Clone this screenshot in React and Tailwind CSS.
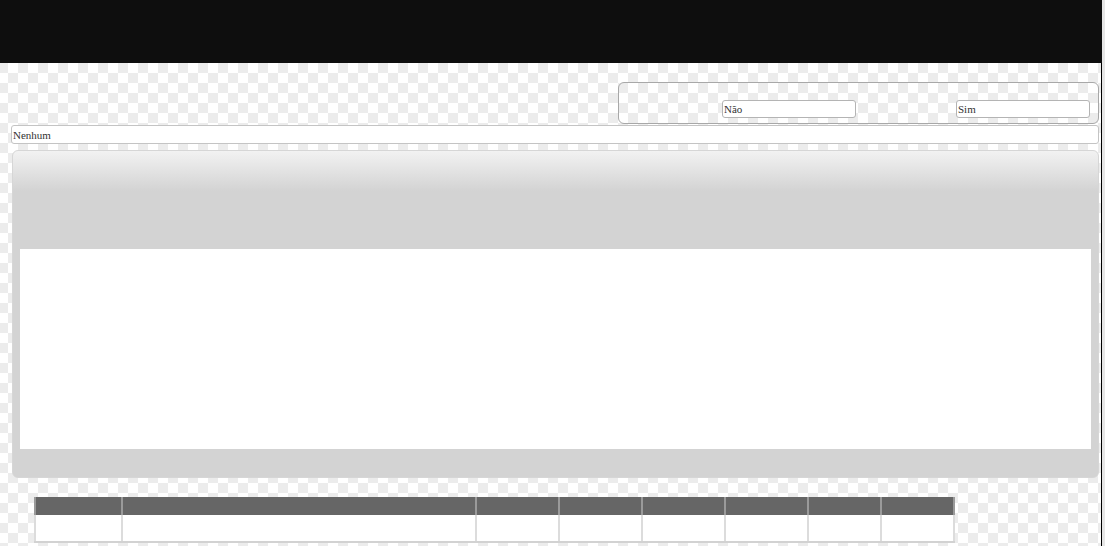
export default function App() {
    const cols = [87, 354, 83, 83, 83, 83, 73, 73];

    return (
        <div className="h-[546px] w-[1105px] overflow-hidden bg-[#e6e6e6] font-['Liberation_Serif',serif] text-[11px] text-[#333]">
            <div className="w-[1102px]">
                <header className="h-[63px] bg-[#0e0e0e]" />

                <main className="h-[483px] border-r border-black bg-[repeating-conic-gradient(#ececec_0_25%,#ffffff_0_50%)] bg-[length:20px_20px] bg-[position:8px_0px]">
                    <div className="flex justify-end pt-[19px] pr-[2px]">
                        <fieldset className="flex h-[42px] w-[481px] items-end rounded-[6px] border border-[#a8a8a8] pb-[5px]">
                            <input
                                readOnly
                                value="Não"
                                className="ml-[103px] h-[18px] w-[134px] rounded-[3px] border border-[#b4b4b4] bg-white px-px text-[11px] text-[#333] outline-none"
                            />
                            <input
                                readOnly
                                value="Sim"
                                className="ml-[100px] h-[18px] w-[134px] rounded-[3px] border border-[#b4b4b4] bg-white px-px text-[11px] text-[#333] outline-none"
                            />
                        </fieldset>
                    </div>

                    <div className="mt-px pl-[11px] pr-[2px]">
                        <input
                            readOnly
                            value="Nenhum"
                            className="block h-[19px] w-full rounded-[3px] border border-[#c4c4c4] bg-white px-px text-[11px] text-[#333] outline-none"
                        />
                    </div>

                    <section className="mt-[6px] ml-[12px] mr-[2px] h-[328px] rounded-[6px] border border-[#d6d6d6] bg-[linear-gradient(to_bottom,#f2f2f2_0px,#d3d3d3_40px,#d3d3d3_100%)] px-[7px] pt-[98px]">
                        <div className="h-[200px] bg-white" />
                    </section>

                    <div className="mt-[19px] ml-[34px] w-[921px]">
                        <div className="flex h-[18px]">
                            {cols.map((w, i) => (
                                <div key={i} style={{ width: w }} className="border-l-2 border-[#9a9a9a] bg-[#666666]" />
                            ))}
                            <div className="w-[2px] bg-[#9a9a9a]" />
                        </div>
                        <div className="flex h-[28px] border-b-2 border-[#d2d2d2]">
                            {cols.map((w, i) => (
                                <div key={i} style={{ width: w }} className="border-l-2 border-[#dcdcdc] bg-white" />
                            ))}
                            <div className="w-[2px] bg-[#dcdcdc]" />
                        </div>
                    </div>
                </main>
            </div>
        </div>
    );
}
